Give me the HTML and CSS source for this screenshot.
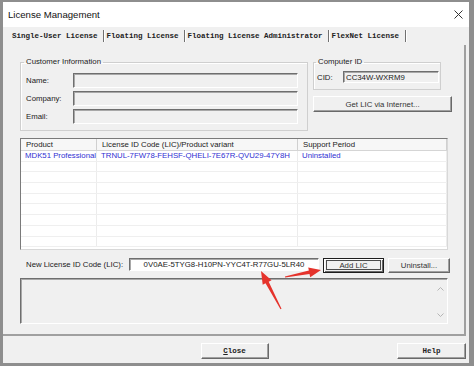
FILE: index.html
```html
<!DOCTYPE html>
<html lang="en">
<head>
    <meta charset="UTF-8">
    <title>License Management</title>
    <link rel="stylesheet" href="styles.css">
</head>
<body>
    <div class="window">
        <div class="titlebar">
            <span class="title">License Management</span>
            <svg class="close-x" width="9" height="9" viewBox="0 0 9 9">
                <path d="M0.5 0.5 L8.5 8.5 M8.5 0.5 L0.5 8.5" stroke="#333" stroke-width="1" fill="none"/>
            </svg>
        </div>

        <div class="tabs">
            <span class="tab active">Single-User License</span>
            <span class="tab">Floating License</span>
            <span class="tab">Floating License Administrator</span>
            <span class="tab">FlexNet License</span>
        </div>

        <div class="panel">
            <div class="top-row">
                <fieldset class="group customer">
                    <legend>Customer Information</legend>
                    <div class="field"><label>Name:</label><input class="edit" type="text" disabled></div>
                    <div class="field"><label>Company:</label><input class="edit" type="text" disabled></div>
                    <div class="field"><label>Email:</label><input class="edit" type="text" disabled></div>
                </fieldset>
                <div class="right-col">
                    <fieldset class="group computer">
                        <legend>Computer ID</legend>
                        <div class="field"><label>CID:</label><input class="edit cid" type="text" value="CC34W-WXRM9" readonly></div>
                    </fieldset>
                    <button class="btn get-lic">Get LIC via Internet...</button>
                </div>
            </div>

            <div class="listview">
                <div class="lv-row lv-head">
                    <span>Product</span>
                    <span>License ID Code (LIC)/Product variant</span>
                    <span>Support Period</span>
                </div>
                <div class="lv-row item">
                    <span>MDK51 Professional</span>
                    <span>TRNUL-7FW78-FEHSF-QHELI-7E67R-QVU29-47Y8H</span>
                    <span>Uninstalled</span>
                </div>
                <div class="lv-row"><span></span><span></span><span></span></div>
                <div class="lv-row"><span></span><span></span><span></span></div>
                <div class="lv-row"><span></span><span></span><span></span></div>
                <div class="lv-row"><span></span><span></span><span></span></div>
                <div class="lv-row"><span></span><span></span><span></span></div>
                <div class="lv-row"><span></span><span></span><span></span></div>
                <div class="lv-row"><span></span><span></span><span></span></div>
                <div class="lv-row"><span></span><span></span><span></span></div>
            </div>

            <div class="lic-row">
                <label>New License ID Code (LIC):</label>
                <input class="edit lic" type="text" value="0V0AE-5TYG8-H10PN-YYC4T-R77GU-5LR40">
                <button class="btn default"><span>Add LIC</span></button>
                <button class="btn uninstall">Uninstall...</button>
            </div>

            <div class="status">
                <div class="scroll">
                    <svg width="7" height="4" viewBox="0 0 7 4"><path d="M0.5 3.5 L3.5 0.5 L6.5 3.5" stroke="#b5b5b5" fill="none"/></svg>
                    <svg width="7" height="4" viewBox="0 0 7 4"><path d="M0.5 0.5 L3.5 3.5 L6.5 0.5" stroke="#b5b5b5" fill="none"/></svg>
                </div>
            </div>
        </div>

        <div class="footer">
            <span></span>
            <button class="btn mono"><u>C</u>lose</button>
            <button class="btn mono help">Help</button>
        </div>

        <!-- red annotation arrows -->
        <svg class="arrows" width="474" height="366" viewBox="0 0 474 366">
            <polygon fill="#e5332c" points="281.5,308.7 268.7,281.7 271.5,280.2 261,271 262.7,284.8 265.5,283.3 280.5,309.3"/>
            <polygon fill="#e5332c" points="284.9,276.5 308.9,270.5 308.2,267.4 321,270 310.2,277.2 309.5,274.1 285.1,277.5"/>
        </svg>
    </div>
</body>
</html>
```

FILE: styles.css
```css
* {
    box-sizing: border-box;
}
body {
    margin: 0;
    font-family: "Liberation Sans", Arial, sans-serif;
    font-size: 7.8px;
    color: #1a1a1a;
}
.window {
    position: relative;
    width: 474px;
    height: 366px;
    border-style: solid;
    border-color: #8e8e8e;
    border-width: 2px 5px 3px 3px;
    background-color: #f0f0f0;
    display: flex;
    flex-direction: column;
}
.titlebar {
    height: 25px;
    flex: none;
    background-color: #ffffff;
    display: flex;
    align-items: center;
    justify-content: space-between;
    padding: 0 6px 0 5px;
}
.title {
    font-size: 9.6px;
    color: #111111;
}
.tabs {
    height: 18px;
    flex: none;
    display: flex;
    align-items: center;
    padding-left: 6.5px;
    font-family: "Liberation Mono", monospace;
    font-weight: bold;
    font-size: 7.5px;
    color: #222222;
}
.tab {
    padding: 0 5.5px 0 2.5px;
    line-height: 12px;
    border-right: 1px solid #707070;
    box-shadow: 1px 0 0 #ffffff;
}

/* tab page */
.panel {
    height: 291px;
    flex: none;
    margin-right: 3px;
    padding: 12px 0 0 17px;
    border-right: 2px solid #a0a0a0;
    border-bottom: 2px solid #a0a0a0;
    display: flex;
    flex-direction: column;
}
.top-row {
    display: flex;
    gap: 5px;
    align-items: flex-start;
}
.group {
    margin: 0;
    border: 1px solid #cfcfcf;
    box-shadow: inset 1px 1px 0 #ffffff;
}
.group legend {
    line-height: 10px;
    padding: 0 2px;
    margin-left: -2px;
    color: #1a1a1a;
}
.customer {
    width: 288px;
    padding: 6px 9px 6px 5px;
    display: flex;
    flex-direction: column;
    gap: 3px;
}
.computer {
    width: 128px;
    padding: 4px 1px 6px 3px;
}
.computer legend {
    margin-left: -1px;
}
.field {
    display: flex;
    align-items: center;
}
.customer label {
    width: 47px;
}
.computer label {
    width: 26px;
}
.edit {
    margin: 0;
    padding: 0 2px;
    font: inherit;
    color: #1a1a1a;
    background-color: #f0f0f0;
    border: 1px solid;
    border-color: #6e6e6e #ffffff #ffffff #6e6e6e;
    box-shadow: inset 1px 1px 0 #a8a8a8;
    outline: none;
}
.customer .edit {
    width: 225px;
    height: 15px;
}
.cid {
    width: 96px;
    height: 12px;
}
.right-col {
    width: 139px;
    display: flex;
    flex-direction: column;
    gap: 6px;
}

.btn {
    margin: 0;
    padding: 0;
    font: inherit;
    color: #333333;
    background-color: #f0f0f0;
    border: 1px solid;
    border-color: #ffffff #696969 #696969 #ffffff;
    box-shadow: inset -1px -1px 0 #a0a0a0;
    cursor: pointer;
}
.get-lic {
    width: 139px;
    height: 16px;
}

/* list view */
.listview {
    margin-top: 7px;
    width: 428px;
    height: 112px;
    background-color: #ffffff;
    border: 1px solid;
    border-color: #7a7a7a #d8d8d8 #d8d8d8 #7a7a7a;
}
.lv-row {
    display: grid;
    grid-template-columns: 76px 201px 1fr;
    height: 10.7px;
    line-height: 10px;
    border-bottom: 1px solid #efefef;
}
.lv-row span {
    padding-left: 4px;
    white-space: nowrap;
    overflow: hidden;
    border-right: 1px solid #ececec;
}
.lv-row.lv-head {
    height: 12px;
    line-height: 11px;
    background-color: #f7f7f7;
    border-bottom: 1px solid #d5d5d5;
    color: #1a1a1a;
}
.lv-head span {
    padding-left: 5px;
    border-right: 1px solid #d0d0d0;
}
.lv-row.item {
    color: #2f2fd2;
}

/* new LIC row */
.lic-row {
    margin-top: 8px;
    height: 15px;
    padding-left: 6px;
    display: flex;
    align-items: flex-start;
}
.lic-row label {
    width: 103px;
    line-height: 13px;
}
.edit.lic {
    width: 190px;
    height: 12.5px;
    background-color: #ffffff;
    text-align: center;
}
.btn.default {
    width: 61px;
    height: 15px;
    margin-left: 4px;
    border: 1px solid #1e1e1e;
    box-shadow: inset 1px 1px 0 #ffffff, inset -1px -1px 0 #696969;
    padding: 1px 2px 2px;
}
.btn.default span {
    display: block;
    height: 100%;
    line-height: 9px;
    border: 1px solid #4a4a4a;
}
.uninstall {
    width: 62px;
    height: 15px;
    margin-left: 4px;
}

/* status output */
.status {
    margin-top: 5px;
    width: 428px;
    height: 46px;
    display: flex;
    justify-content: flex-end;
    border: 1px solid;
    border-color: #6e6e6e #ffffff #ffffff #6e6e6e;
    box-shadow: inset 1px 1px 0 #a8a8a8;
}
.scroll {
    width: 14px;
    display: flex;
    flex-direction: column;
    justify-content: space-between;
    align-items: center;
    padding: 8px 0 6px;
}

/* bottom buttons */
.footer {
    flex: 1;
    display: grid;
    grid-template-columns: 1fr 68px 1fr;
    align-items: start;
    padding: 7px 3px 0 0;
}
.btn.mono {
    height: 16px;
    font-family: "Liberation Mono", monospace;
    font-weight: bold;
    font-size: 7.5px;
    color: #222222;
}
.help {
    width: 69px;
    justify-self: end;
}

.arrows {
    position: absolute;
    left: -3px;
    top: -2px;
    pointer-events: none;
}
```
